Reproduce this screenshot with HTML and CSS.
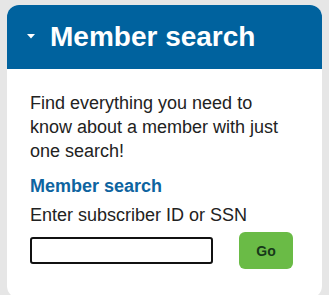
FILE: index.html
```html
<!DOCTYPE html>
<html>
<head>
<meta charset="utf-8">
<link rel="stylesheet" href="styles.css">
</head>
<body>
<div class="card">
  <div class="card-header">
    <svg class="caret" width="8" height="5" viewBox="0 0 8 5"><polygon points="0,0 8,0 4,4.5" fill="#fff"/></svg>
    <h1 class="title">Member search</h1>
  </div>
  <div class="card-body">
    <p class="intro">Find everything you need to know about a member with just one search!</p>
    <h2 class="subtitle">Member search</h2>
    <label class="label" for="sid">Enter subscriber ID or SSN</label>
    <div class="search-row">
      <input id="sid" class="search-input" type="text">
      <button class="go-btn" type="button">Go</button>
    </div>
  </div>
</div>
</body>
</html>
```
FILE: styles.css
```css
html, body {
  margin: 0;
  padding: 0;
}
body {
  background: #e6e6e6;
  font-family: "Liberation Sans", Arial, sans-serif;
  padding: 5px 7px 0 7px;
  height: 295px;
  box-sizing: border-box;
  overflow: hidden;
}
.card {
  width: 315px;
  height: 293px;
  background: #fff;
  border-radius: 12px;
  overflow: hidden;
}
.card-header {
  background: #00629e;
  height: 64px;
  display: flex;
  align-items: center;
  padding-left: 20px;
  gap: 15px;
}
.caret {
  display: block;
  margin-top: -1px;
}
.title {
  margin: 0;
  color: #fff;
  font-size: 28px;
  font-weight: bold;
  line-height: 32px;
}
.card-body {
  padding: 22px 23px 0 23px;
}
.intro {
  margin: 0;
  font-size: 18px;
  line-height: 24px;
  color: #222;
}
.subtitle {
  margin: 12px 0 0 0;
  font-size: 18px;
  line-height: 22px;
  font-weight: bold;
  color: #0e64a0;
}
.label {
  display: block;
  margin-top: 6px;
  font-size: 18px;
  line-height: 24px;
  color: #222;
}
.search-row {
  display: flex;
  align-items: center;
  gap: 26px;
  margin-top: 5px;
}
.search-input {
  width: 183px;
  height: 27px;
  box-sizing: border-box;
  border: 2px solid #111;
  border-radius: 3px;
  margin: 0;
  padding: 0 6px;
  font-family: inherit;
}
.go-btn {
  width: 54px;
  height: 37px;
  background: #6abb46;
  border: none;
  border-radius: 6px;
  color: #17381a;
  font-family: inherit;
  font-weight: bold;
  font-size: 14px;
  padding: 0;
}
```
